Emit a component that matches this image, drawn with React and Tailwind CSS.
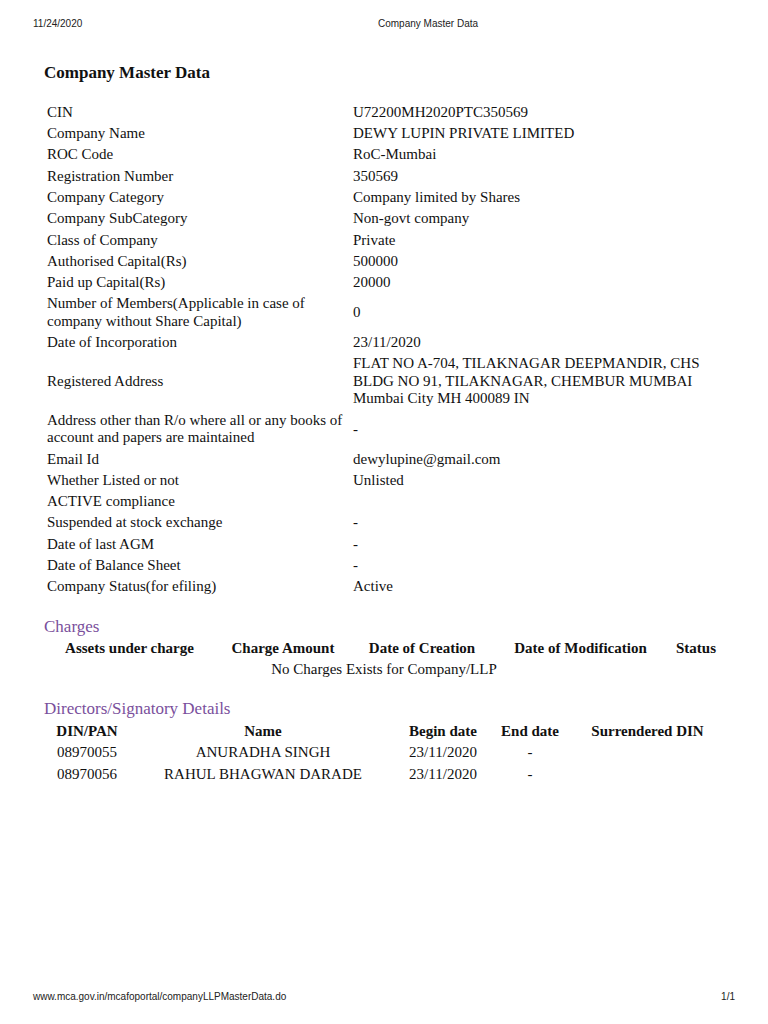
const details = [
  ['CIN', 'U72200MH2020PTC350569'],
  ['Company Name', 'DEWY LUPIN PRIVATE LIMITED'],
  ['ROC Code', 'RoC-Mumbai'],
  ['Registration Number', '350569'],
  ['Company Category', 'Company limited by Shares'],
  ['Company SubCategory', 'Non-govt company'],
  ['Class of Company', 'Private'],
  ['Authorised Capital(Rs)', '500000'],
  ['Paid up Capital(Rs)', '20000'],
  ['Number of Members(Applicable in case of company without Share Capital)', '0'],
  ['Date of Incorporation', '23/11/2020'],
  ['Registered Address', 'FLAT NO A-704, TILAKNAGAR DEEPMANDIR, CHS BLDG NO 91, TILAKNAGAR, CHEMBUR MUMBAI Mumbai City MH 400089 IN'],
  ['Address other than R/o where all or any books of account and papers are maintained', '-'],
  ['Email Id', 'dewylupine@gmail.com'],
  ['Whether Listed or not', 'Unlisted'],
  ['ACTIVE compliance', ''],
  ['Suspended at stock exchange', '-'],
  ['Date of last AGM', '-'],
  ['Date of Balance Sheet', '-'],
  ['Company Status(for efiling)', 'Active'],
];

const chargeCols = [
  ['Assets under charge', 'w-[165px]'],
  ['Charge Amount', 'w-[142px]'],
  ['Date of Creation', 'w-[136px]'],
  ['Date of Modification', 'w-[181px]'],
  ['Status', 'w-[50px]'],
];

const directors = [
  ['08970055', 'ANURADHA SINGH', '23/11/2020', '-', ''],
  ['08970056', 'RAHUL BHAGWAN DARADE', '23/11/2020', '-', ''],
];

const dirWidths = ['w-[80px]', 'w-[272px]', 'w-[88px]', 'w-[86px]', 'w-[149px]'];
const dirHeads = ['DIN/PAN', 'Name', 'Begin date', 'End date', 'Surrendered DIN'];

export default function App() {
  return (
    <div className="h-[1024px] flex flex-col bg-white text-[#111] overflow-hidden">
      {/* print header */}
      <div className="flex pt-[18px] px-[33px] text-[10px] leading-[12px] font-['Liberation_Sans',Arial,sans-serif] text-[#222]">
        <span className="w-[345px]">11/24/2020</span>
        <span>Company Master Data</span>
      </div>

      <div className="font-['Liberation_Serif','Times_New_Roman',serif]">
        <h1 className="mt-[33px] pl-[44px] text-[17px] leading-[20px] font-bold">Company Master Data</h1>

        <div className="mt-[19px] pl-[47px] text-[15px] leading-[17.5px]">
          {details.map(([label, value]) => (
            <div key={label} className="flex items-center py-[1.9px]">
              <div className="w-[306px] pr-[6px]">{label}</div>
              <div className="w-[360px]">{value}</div>
            </div>
          ))}
        </div>

        <h2 className="mt-[19px] pl-[44px] text-[17px] leading-[20px] text-[#7a4f9c]">Charges</h2>
        <div className="mt-[1.5px] pl-[47px] text-[15px] leading-[17.5px]">
          <div className="flex py-[1.9px] font-bold">
            {chargeCols.map(([h, w]) => (
              <div key={h} className={`${w} text-center`}>{h}</div>
            ))}
          </div>
          <div className="w-[674px] text-center py-[1.9px]">No Charges Exists for Company/LLP</div>
        </div>

        <h2 className="mt-[18.5px] pl-[44px] text-[17px] leading-[20px] text-[#7a4f9c]">Directors/Signatory Details</h2>
        <div className="mt-[2px] pl-[47px] text-[15px] leading-[17.5px]">
          <div className="flex py-[1.9px] font-bold">
            {dirHeads.map((h, i) => (
              <div key={h} className={`${dirWidths[i]} text-center`}>{h}</div>
            ))}
          </div>
          {directors.map((row) => (
            <div key={row[0]} className="flex py-[1.9px]">
              {row.map((c, i) => (
                <div key={i} className={`${dirWidths[i]} text-center`}>{c}</div>
              ))}
            </div>
          ))}
        </div>
      </div>

      {/* print footer */}
      <div className="mt-auto flex justify-between pb-[21px] pl-[33px] pr-[33px] text-[10px] leading-[12px] font-['Liberation_Sans',Arial,sans-serif] text-[#222]">
        <span>www.mca.gov.in/mcafoportal/companyLLPMasterData.do</span>
        <span>1/1</span>
      </div>
    </div>
  );
}
